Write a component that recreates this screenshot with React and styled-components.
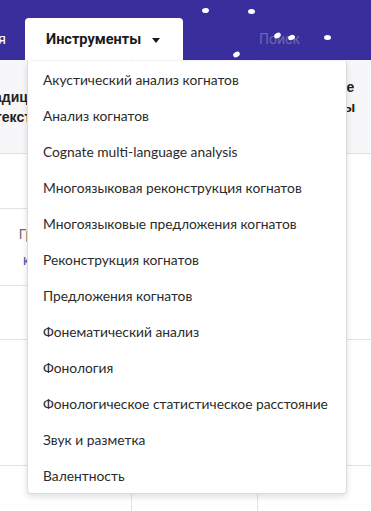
import React from 'react'
import styled, { createGlobalStyle } from 'styled-components'

const GlobalStyle = createGlobalStyle`
  html, body {
    margin: 0;
    padding: 0;
    background: #fff;
    overflow: hidden;
  }
  body {
    font-family: Lato, 'Noto Sans', sans-serif;
    font-size: 14px;
    color: #222;
  }
`

const tools = [
  'Акустический анализ когнатов',
  'Анализ когнатов',
  'Cognate multi-language analysis',
  'Многоязыковая реконструкция когнатов',
  'Многоязыковые предложения когнатов',
  'Реконструкция когнатов',
  'Предложения когнатов',
  'Фонематический анализ',
  'Фонология',
  'Фонологическое статистическое расстояние',
  'Звук и разметка',
  'Валентность'
]

const flakes = [
  { x: 202, y: 8, r: -10 },
  { x: 248, y: 9, r: 0 },
  { x: 274, y: 33, r: -30 },
  { x: 288, y: 35, r: -20 },
  { x: 324, y: 35, r: 0 },
  { x: 233, y: 52, r: -30 }
]

const Page = styled.div`
  position: relative;
  width: 371px;
  height: 511px;
  overflow: hidden;
`

const Navbar = styled.nav`
  position: relative;
  height: 60px;
  background: #392e9c;
  display: flex;
  align-items: flex-end;
`

const NavLink = styled.div`
  width: 25px;
  height: 42px;
  box-sizing: border-box;
  padding-right: 19px;
  display: flex;
  align-items: center;
  justify-content: flex-end;
  overflow: hidden;
  font-family: Roboto, sans-serif;
  color: #fff;
  white-space: nowrap;
`

const ActiveTab = styled.div`
  height: 42px;
  width: 158px;
  box-sizing: border-box;
  background: #fff;
  border-radius: 4px 4px 0 0;
  display: flex;
  align-items: center;
  padding-left: 21px;
  font-family: Roboto, sans-serif;
  font-size: 14.5px;
  font-weight: 700;
  color: #1b1b1b;
  gap: 11px;
`

const Caret = styled.span`
  width: 0;
  height: 0;
  border-left: 4px solid transparent;
  border-right: 4px solid transparent;
  border-top: 5px solid #1b1b1b;
  margin-top: 2px;
`

const Search = styled.div`
  height: 42px;
  display: flex;
  align-items: center;
  margin-left: 76px;
  font-family: Roboto, sans-serif;
  color: #6c68ae;
`

const Flake = styled.span`
  position: absolute;
  width: 7px;
  height: 5px;
  border-radius: 50%;
  background: #fff;
`

const TableWrap = styled.div`
  margin-left: -71px;
`

const Grid = styled.div`
  display: grid;
  grid-template-columns: 203px 126px 142px 100px;
`

const HeadCell = styled.div`
  height: 94px;
  background: #f7f7f9;
  border-bottom: 1px solid #e2e2e2;
  border-right: 1px solid #e2e2e2;
  display: flex;
  align-items: center;
  justify-content: center;
  text-align: center;
  font-family: 'Liberation Sans', Arial, sans-serif;
  font-weight: 700;
  line-height: 20px;
  color: #222;
  box-sizing: border-box;
`

const Cell = styled.div`
  height: ${p => p.h}px;
  grid-row: span ${p => p.span || 1};
  border-bottom: 1px solid #e2e2e2;
  border-right: 1px solid #e2e2e2;
  box-sizing: border-box;
  display: flex;
  flex-direction: column;
  align-items: center;
  justify-content: center;
  gap: 10px;
  font-family: 'Liberation Sans', Arial, sans-serif;
  color: #6a6a6a;
  text-align: center;
`

const CellLink = styled.span`
  color: #3f51b5;
`

const Menu = styled.ul`
  position: absolute;
  left: 27px;
  top: 61px;
  width: 320px;
  margin: 0;
  padding: 0;
  list-style: none;
  background: #fff;
  border: 1px solid #dcdcdc;
  border-top: none;
  border-radius: 0 0 4px 4px;
  box-shadow: 0 3px 6px rgba(0, 0, 0, 0.12);
  box-sizing: border-box;
`

const MenuItem = styled.li`
  height: 36px;
  display: flex;
  align-items: center;
  padding-left: 15px;
  font-family: Lato, sans-serif;
  font-size: 13.8px;
  color: #2b2b2b;
  white-space: nowrap;
`

export default function App() {
  return (
    <Page>
      <GlobalStyle />
      <Navbar>
        <NavLink>Терминология</NavLink>
        <ActiveTab>
          Инструменты
          <Caret />
        </ActiveTab>
        <Search>Поиск</Search>
        {flakes.map((f, i) => (
          <Flake
            key={`flake-${i}`}
            style={{ left: f.x, top: f.y, transform: `rotate(${f.r}deg)` }}
          />
        ))}
      </Navbar>
      <TableWrap>
        <Grid>
          <HeadCell>Традиционный<br />текстовой</HeadCell>
          <HeadCell>Язык</HeadCell>
          <HeadCell>Прочие<br />пометы<br />и</HeadCell>
          <HeadCell>Дата</HeadCell>

          <Cell h={55} />
          <Cell h={55} />
          <Cell h={186} span={3} />
          <Cell h={186} span={3} />

          <Cell h={77}>
            <span>Гра</span>
            <CellLink>кн</CellLink>
          </Cell>
          <Cell h={77} />

          <Cell h={54} />
          <Cell h={54} />

          <Cell h={126} />
          <Cell h={126} />
          <Cell h={126} />
          <Cell h={126} />

          <Cell h={60} />
          <Cell h={60} />
          <Cell h={60} />
          <Cell h={60} />
        </Grid>
      </TableWrap>
      <Menu>
        {tools.map(t => (
          <MenuItem key={t}>{t}</MenuItem>
        ))}
      </Menu>
    </Page>
  )
}
